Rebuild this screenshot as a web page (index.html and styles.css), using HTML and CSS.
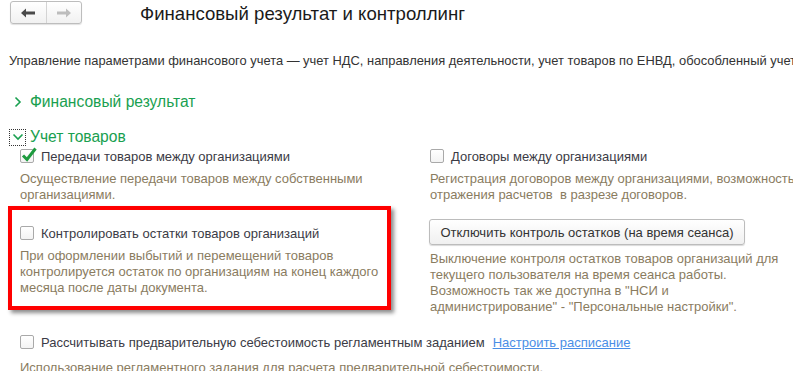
FILE: index.html
```html
<!DOCTYPE html>
<html lang="ru">
<head>
<meta charset="utf-8">
<title>Финансовый результат и контроллинг</title>
<link rel="stylesheet" href="styles.css">
</head>
<body>
<div class="page">
  <header class="topbar">
    <div class="nav">
      <button class="nav-btn" type="button" aria-label="Назад">
        <svg width="14" height="10" viewBox="0 0 14 10"><path d="M0 5 L5 0.5 L5 3.5 L14 3.5 L14 6.5 L5 6.5 L5 9.5 Z" fill="#4a4a4a"/></svg>
      </button>
      <button class="nav-btn" type="button" aria-label="Вперед">
        <svg width="14" height="10" viewBox="0 0 14 10"><path d="M14 5 L9 0.5 L9 3.5 L0 3.5 L0 6.5 L9 6.5 L9 9.5 Z" fill="#bdbdbd"/></svg>
      </button>
    </div>
    <h1 class="title">Финансовый результат и контроллинг</h1>
  </header>

  <p class="intro">Управление параметрами финансового учета — учет НДС, направления деятельности, учет товаров по ЕНВД, обособленный учет</p>

  <section class="group">
    <div class="group-head">
      <span class="chev"><svg width="8" height="12" viewBox="0 0 8 12"><path d="M1.5 1.5 L6 6 L1.5 10.5" fill="none" stroke="#19a050" stroke-width="1.6"/></svg></span>
      <span class="group-title">Финансовый результат</span>
    </div>
  </section>

  <section class="group open">
    <div class="group-head">
      <span class="chev focused"><svg width="12" height="8" viewBox="0 0 12 8"><path d="M1.5 1.5 L6 6 L10.5 1.5" fill="none" stroke="#19a050" stroke-width="1.6"/></svg></span>
      <span class="group-title">Учет товаров</span>
    </div>

    <div class="grid">
      <div class="cell">
        <div class="check"><span class="box"><svg class="tick" width="18" height="18" viewBox="0 0 18 18"><path d="M3 9.5 L7 13.5 L15.5 2.5" fill="none" stroke="#1d9b3e" stroke-width="3"/></svg></span><span>Передачи товаров между организациями</span></div>
        <p class="hint wide">Осуществление передачи товаров между собственными организациями.</p>
      </div>
      <div class="cell">
        <div class="check"><span class="box"></span><span>Договоры между организациями</span></div>
        <p class="hint">Регистрация договоров между организациями, возможность отражения расчетов&nbsp; в разрезе договоров.</p>
      </div>
      <div class="cell">
        <div class="highlight">
          <div class="check"><span class="box"></span><span>Контролировать остатки товаров организаций</span></div>
          <p class="hint">При оформлении выбытий и перемещений товаров контролируется остаток по организациям на конец каждого месяца после даты документа.</p>
        </div>
      </div>
      <div class="cell">
        <button class="btn" type="button">Отключить контроль остатков (на время сеанса)</button>
        <p class="hint narrow">Выключение контроля остатков товаров организаций для текущего пользователя на время сеанса работы. Возможность так же доступна в "НСИ и администрирование" - "Персональные настройки".</p>
      </div>
    </div>

    <div class="bottom">
      <div class="check"><span class="box"></span><span>Рассчитывать предварительную себестоимость регламентным заданием</span><a class="link" href="#">Настроить расписание</a></div>
      <p class="hint bottom-hint">Использование регламентного задания для расчета предварительной себестоимости.</p>
    </div>
  </section>
</div>
</body>
</html>
```

FILE: styles.css
```css
html, body {
  margin: 0;
  padding: 0;
  background: #ffffff;
  overflow: hidden;
}

body {
  font-family: "Liberation Sans", Arial, sans-serif;
  font-size: 13px;
  line-height: 16px;
  color: #333333;
}

.page {
  width: 793px;
  height: 371px;
  overflow: hidden;
}

.topbar {
  display: flex;
  align-items: flex-start;
  padding-top: 1px;
  padding-left: 10px;
  height: 25px;
}

.nav {
  display: flex;
  width: 72px;
  height: 23px;
  box-sizing: border-box;
  border: 1px solid #bdbdbd;
  border-radius: 3px;
  background: linear-gradient(#ffffff, #f1f1f1);
  box-shadow: 0 1px 1px rgba(0, 0, 0, 0.12);
}

.nav-btn {
  flex: 1;
  border: 0;
  background: transparent;
  padding: 0;
  margin: 0;
  display: flex;
  align-items: center;
  justify-content: center;
}

.nav-btn + .nav-btn {
  border-left: 1px solid #d4d4d4;
}

.title {
  margin: 2px 0 0 58px;
  font-size: 18.6px;
  line-height: 22px;
  font-weight: normal;
  color: #1a1a1a;
  white-space: nowrap;
}

.intro {
  margin: 27px 0 0 9px;
  white-space: nowrap;
  color: #333333;
  font-size: 12.9px;
}

.group-head {
  display: flex;
  align-items: center;
  height: 20px;
}

.group:first-of-type .group-head {
  margin-top: 23px;
}

.group.open .group-head {
  margin-top: 15px;
}

.chev {
  display: flex;
  align-items: center;
  justify-content: center;
  width: 17px;
  height: 17px;
  margin-left: 9px;
  margin-right: 4px;
  box-sizing: border-box;
}

.chev.focused {
  border: 1px dotted #333333;
}

.group-title {
  font-size: 15.6px;
  line-height: 20px;
  color: #19a050;
}

.grid {
  display: grid;
  grid-template-columns: 410px 380px;
  padding-left: 20px;
  margin-top: 2px;
}

.cell:nth-child(3) {
  margin-top: 3px;
}

.cell:nth-child(4) {
  margin-top: 16px;
}

.check {
  display: flex;
  align-items: flex-start;
  white-space: nowrap;
  color: #3b3b45;
}

.box {
  position: relative;
  width: 14px;
  height: 14px;
  box-sizing: border-box;
  border: 1px solid #a9a9a9;
  border-radius: 2px;
  background: linear-gradient(#ffffff, #f3f3f3);
  margin-right: 7px;
  flex: none;
}

.tick {
  position: absolute;
  left: -1px;
  top: -4px;
}

.hint {
  margin: 6px 0 0 0;
  color: #8a7c5f;
  width: 380px;
}

.hint.wide {
  width: 375px;
}

.hint.narrow {
  width: 355px;
}

.highlight {
  margin-left: -12px;
  width: 359px;
  border: 4px solid #ff0000;
  padding: 16px 8px 10px 8px;
  box-shadow: 3px 3px 4px rgba(0, 0, 0, 0.45);
}

.highlight .hint {
  width: 359px;
}

.btn {
  display: block;
  width: 316px;
  height: 26px;
  box-sizing: border-box;
  border: 1px solid #bcbcbc;
  border-radius: 3px;
  background: linear-gradient(#ffffff, #f0f0f0);
  box-shadow: 0 1px 1px rgba(0, 0, 0, 0.15);
  font-family: "Liberation Sans", Arial, sans-serif;
  font-size: 13px;
  color: #333333;
  padding: 0;
  margin-left: -1px;
}

.bottom {
  padding-left: 20px;
  margin-top: 20px;
}

.link {
  margin-left: 8px;
  color: #4a8ee6;
  text-decoration: underline;
}

.bottom-hint {
  margin-top: 9px;
  width: 700px;
}
```
